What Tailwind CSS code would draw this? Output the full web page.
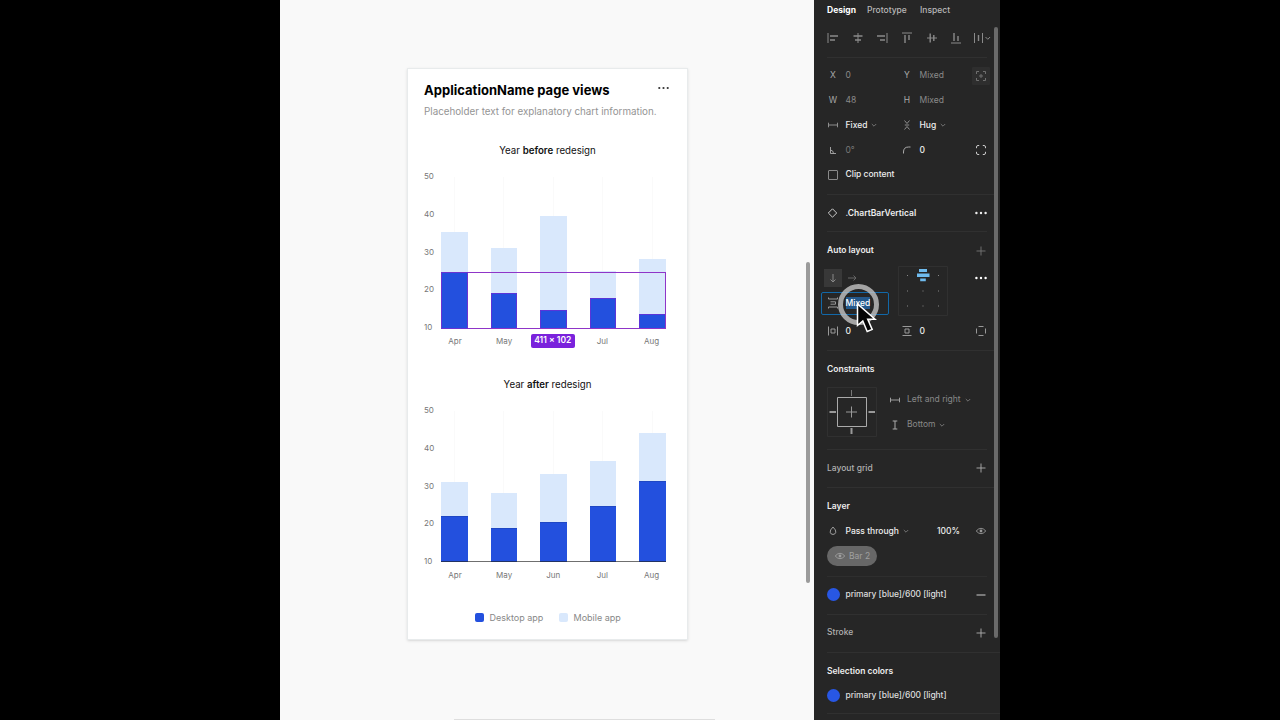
<!DOCTYPE html>
<html lang="en">
<head>
<meta charset="utf-8">
<title>ApplicationName page views</title>
<script src="https://cdn.jsdelivr.net/npm/@tailwindcss/browser@4"></script>
</head>
<body class="bg-black">
<svg class="hidden">
  <defs>
    <symbol id="chev" viewBox="0 0 6 6"><path d="M.8 2 3 4.200 5.200 2" fill="none" stroke="currentColor" stroke-width=".8"/></symbol>
    <symbol id="plus" viewBox="0 0 12 12"><path d="M1.500 6h9M6 1.500v9" fill="none" stroke="currentColor" stroke-width=".9"/></symbol>
    <symbol id="dots" viewBox="0 0 12 12"><g fill="currentColor"><circle cx="1.400" cy="6" r="1.200"/><circle cx="6" cy="6" r="1.200"/><circle cx="10.600" cy="6" r="1.200"/></g></symbol>
    <symbol id="horiz" viewBox="0 0 12 12"><path d="M1.500 3.700v4.600M10.500 3.700v4.600M1.500 6h9" fill="none" stroke="currentColor" stroke-width=".9"/></symbol>
    <symbol id="eye" viewBox="0 0 12 12"><path d="M1.200 6Q6 .6 10.800 6 6 11.400 1.200 6Z" fill="none" stroke="currentColor" stroke-width=".9"/><circle cx="6" cy="6" r="1.400" fill="currentColor"/></symbol>
  </defs>
</svg>
<div class="w-[720px] h-[720px] ml-[280px] flex overflow-hidden relative font-['Inter',sans-serif]">

  <main class="w-[534px] h-full bg-[#f9f9f9] pl-[127px] pt-[68px]">
    <article class="w-[281px] h-[572px] bg-white outline -outline-offset-1 outline-[#e8ebec] shadow-sm shadow-black/10 flex flex-col">
      <header class="h-[67px] pl-[17px] pr-[19px] pt-[13px] flex justify-between">
        <div>
          <h1 class="text-[13px] leading-[18px] font-bold text-black whitespace-nowrap tracking-[.02px]">ApplicationName page views</h1>
          <p class="mt-[4.500px] text-[9.800px] leading-[16px] text-[#949494] whitespace-nowrap">Placeholder text for explanatory chart information.</p>
        </div>
        <svg class="w-[11px] h-3 mt-[1px] shrink-0 -ml-5 text-[#333]"><use href="#dots"/></svg>
      </header>

      <section class="h-[234px] pl-[17px]">
        <h2 class="h-8 w-[247px] text-center text-[9.700px] leading-[32px] text-[#111]">Year <b class="font-semibold">before</b> redesign</h2>
        <div class="flex">
          <ol class="w-[17px] h-[168px] mt-[1px] flex flex-col text-[8px] leading-[17px] text-[#777]">
            <li class="h-[37.900px]">50</li><li class="h-[37.900px]">40</li><li class="h-[37.900px]">30</li><li class="h-[37.900px]">20</li><li>10</li>
          </ol>
          <div class="w-[224.500px]">
            <div class="h-[151px] mt-[10px] relative flex justify-between items-end">
              <div class="w-[26.500px] h-full flex flex-col items-center"><i class="w-px flex-1 bg-[#fafafa]"></i><i class="w-full h-[40px] bg-[#d9e8fc]"></i><i class="w-full h-[56px] bg-[#2350de]"></i></div>
              <div class="w-[26.500px] h-full flex flex-col items-center"><i class="w-px flex-1 bg-[#fafafa]"></i><i class="w-full h-[45px] bg-[#d9e8fc]"></i><i class="w-full h-[35px] bg-[#2350de] border border-b-0 border-[#5a35d8]"></i></div>
              <div class="w-[26.500px] h-full flex flex-col items-center"><i class="w-px flex-1 bg-[#fafafa]"></i><i class="w-full h-[94px] bg-[#d9e8fc]"></i><i class="w-full h-[18.500px] bg-[#2350de] border border-b-0 border-[#5a35d8]"></i></div>
              <div class="w-[26.500px] h-full flex flex-col items-center"><i class="w-px flex-1 bg-[#fafafa]"></i><i class="w-full h-[26.500px] bg-[#d9e8fc]"></i><i class="w-full h-[30.500px] bg-[#2350de] border border-b-0 border-[#5a35d8]"></i></div>
              <div class="w-[26.500px] h-full flex flex-col items-center"><i class="w-px flex-1 bg-[#fafafa]"></i><i class="w-full h-[55px] bg-[#d9e8fc]"></i><i class="w-full h-[14px] bg-[#2350de] border border-b-0 border-[#5a35d8]"></i></div>
              <div class="absolute left-0 -right-[.5px] bottom-[-1px] h-[57px] border border-[#8f35c8]"></div>
              <div class="absolute left-0 bottom-[-1px] h-[57px] w-[27px] border border-[#6b35d0]"></div>
            </div>
            <div class="relative flex justify-between text-[8px] leading-[12px] text-[#777] mt-[7px]">
              <span class="w-[28px] text-center">Apr</span><span class="w-[28px] text-center">May</span><span class="w-[28px] text-center"></span><span class="w-[28px] text-center">Jul</span><span class="w-[28px] text-center">Aug</span>
              <span class="absolute left-[90px] -top-[1px] w-[43.500px] h-[13.500px] rounded-[2px] bg-[#7a22dc] text-white text-center font-semibold text-[8.500px] leading-[13.500px] whitespace-nowrap">411 × 102</span>
            </div>
          </div>
        </div>
      </section>

      <section class="h-[234px] pl-[17px]">
        <h2 class="h-8 w-[247px] text-center text-[9.700px] leading-[32px] text-[#111]">Year <b class="font-semibold">after</b> redesign</h2>
        <div class="flex">
          <ol class="w-[17px] h-[168px] mt-[1px] flex flex-col text-[8px] leading-[17px] text-[#777]">
            <li class="h-[37.900px]">50</li><li class="h-[37.900px]">40</li><li class="h-[37.900px]">30</li><li class="h-[37.900px]">20</li><li>10</li>
          </ol>
          <div class="w-[224.500px]">
            <div class="h-[151px] mt-[10px] relative flex justify-between items-end">
              <div class="w-[26.500px] h-full flex flex-col items-center"><i class="w-px flex-1 bg-[#fafafa]"></i><i class="w-full h-[34px] bg-[#d9e8fc]"></i><i class="w-full h-[46px] bg-[#2350de] border-t border-[#1f47c4]"></i></div>
              <div class="w-[26.500px] h-full flex flex-col items-center"><i class="w-px flex-1 bg-[#fafafa]"></i><i class="w-full h-[35px] bg-[#d9e8fc]"></i><i class="w-full h-[34px] bg-[#2350de] border-t border-[#1f47c4]"></i></div>
              <div class="w-[26.500px] h-full flex flex-col items-center"><i class="w-px flex-1 bg-[#fafafa]"></i><i class="w-full h-[48px] bg-[#d9e8fc]"></i><i class="w-full h-[40px] bg-[#2350de] border-t border-[#1f47c4]"></i></div>
              <div class="w-[26.500px] h-full flex flex-col items-center"><i class="w-px flex-1 bg-[#fafafa]"></i><i class="w-full h-[45px] bg-[#d9e8fc]"></i><i class="w-full h-[56px] bg-[#2350de] border-t border-[#1f47c4]"></i></div>
              <div class="w-[26.500px] h-full flex flex-col items-center"><i class="w-px flex-1 bg-[#fafafa]"></i><i class="w-full h-[48px] bg-[#d9e8fc]"></i><i class="w-full h-[81px] bg-[#2350de] border-t border-[#1f47c4]"></i></div>
              <div class="absolute inset-x-0 bottom-0 h-px bg-[#222]/65"></div>
            </div>
            <div class="flex justify-between text-[8px] leading-[12px] text-[#777] mt-[7px]">
              <span class="w-[28px] text-center">Apr</span><span class="w-[28px] text-center">May</span><span class="w-[28px] text-center">Jun</span><span class="w-[28px] text-center">Jul</span><span class="w-[28px] text-center">Aug</span>
            </div>
          </div>
        </div>
      </section>

      <footer class="flex pl-[68px] pt-[8px] h-[21px] items-center text-[9px] leading-[14px] text-[#888]">
        <i class="w-[9px] h-[9px] rounded-[2px] bg-[#2350de] mr-[5.500px]"></i><span class="w-[69.500px]">Desktop app</span>
        <i class="w-[9px] h-[9px] rounded-[2px] bg-[#d9e8fc] mr-[5.500px]"></i><span>Mobile app</span>
      </footer>
    </article>
  </main>

  <aside class="w-[186px] h-full bg-[#262626] pl-[13px] text-[8.500px] text-white whitespace-nowrap">
    <nav class="h-[20px] pt-[1px] flex items-center font-medium text-[#b8b8b8]"><span class="w-[40px] font-bold text-white">Design</span><span class="w-[53px]">Prototype</span><span>Inspect</span></nav>
    <div class="h-[37px] w-[168px] pb-[2px] flex items-center text-[#8a8a8a] gap-[12.700px]">
      <svg class="w-3 h-3 shrink-0" viewBox="0 0 12 12"><path d="M1 1v10" stroke="currentColor"/><path d="M3 4h8M3 8h5" stroke="currentColor" stroke-width="1.400"/></svg>
      <svg class="w-3 h-3 shrink-0" viewBox="0 0 12 12"><path d="M6 1v10" stroke="currentColor"/><path d="M1.500 4h9M3 8h6" stroke="currentColor" stroke-width="1.400"/></svg>
      <svg class="w-3 h-3 shrink-0" viewBox="0 0 12 12"><path d="M11 1v10" stroke="currentColor"/><path d="M1 4h8M4 8h5" stroke="currentColor" stroke-width="1.400"/></svg>
      <svg class="w-3 h-3 shrink-0" viewBox="0 0 12 12"><path d="M1 1h10" stroke="currentColor"/><path d="M4 3v8M8 3v5" stroke="currentColor" stroke-width="1.400"/></svg>
      <svg class="w-3 h-3 shrink-0" viewBox="0 0 12 12"><path d="M1 6h10" stroke="currentColor"/><path d="M4.200 1.500v9M7.800 3v6" stroke="currentColor" stroke-width="1.400"/></svg>
      <svg class="w-3 h-3 shrink-0" viewBox="0 0 12 12"><path d="M1 11h10" stroke="currentColor"/><path d="M4 1v8M8 4v5" stroke="currentColor" stroke-width="1.400"/></svg>
      <svg class="w-[18px] h-3 shrink-0 -ml-[2px]" viewBox="0 0 18 12"><path d="M1.500 1v10M9.500 1v10M12.500 5l2.300 2.300L17.100 5" fill="none" stroke="currentColor"/><path d="M5.500 3v6" stroke="currentColor" stroke-width="1.400"/></svg>
    </div>

    <section class="h-[137px] w-[160px] border-t border-[#303030] pt-[5.500px] text-[#8a8a8a]">
      <div class="h-[24.700px] grid grid-cols-[18.500px_55.500px_18.500px_55.500px_12px] items-center"><span class="w-3 text-center text-[#aaa]">X</span><span>0</span><span class="w-3 text-center text-[#aaa]">Y</span><span>Mixed</span>
        <span class="w-[18px] h-[18px] -ml-[3px] bg-[#2e2e2e] rounded-[1px] flex items-center justify-center"><svg class="w-3 h-3 text-[#777]" viewBox="0 0 12 12"><path d="M1.500 4V1.500H4M8 1.500h2.500V4M10.500 8v2.500H8M4 10.500H1.500V8M6 4v4M4 6h4" fill="none" stroke="currentColor" stroke-width=".9"/></svg></span></div>
      <div class="h-[24.700px] grid grid-cols-[18.500px_55.500px_18.500px_55.500px_12px] items-center"><span class="w-3 text-center text-[#aaa]">W</span><span>48</span><span class="w-3 text-center text-[#aaa]">H</span><span>Mixed</span></div>
      <div class="h-[24.700px] grid grid-cols-[18.500px_55.500px_18.500px_55.500px_12px] items-center text-[#999]"><svg class="w-3 h-3"><use href="#horiz"/></svg><span class="flex items-center gap-1 text-[#eee] font-medium">Fixed<svg class="w-1.5 h-1.5 text-[#888]"><use href="#chev"/></svg></span>
        <svg class="w-3 h-3" viewBox="0 0 12 12"><path d="m3.500 1.500 2.500 3 2.500-3M3.500 10.500l2.500-3 2.500 3M3.800 6h4.400" fill="none" stroke="currentColor" stroke-width=".9"/></svg><span class="flex items-center gap-1 text-[#eee] font-medium">Hug<svg class="w-1.5 h-1.5 text-[#888]"><use href="#chev"/></svg></span></div>
      <div class="h-[24.700px] grid grid-cols-[18.500px_55.500px_18.500px_55.500px_12px] items-center text-[#aaa]"><svg class="w-3 h-3" viewBox="0 0 12 12"><path d="M3.500 3v6.500H9M3.500 6q3 .5 3 3.500" fill="none" stroke="currentColor" stroke-width=".9"/></svg><span class="text-[#777]">0°</span>
        <svg class="w-3 h-3" viewBox="0 0 12 12"><path d="M2.500 9.500V8q0-5 5-5H9.500" fill="none" stroke="currentColor"/></svg><span class="text-[#eee] font-medium">0</span>
        <svg class="w-3 h-3 text-[#ccc]" viewBox="0 0 12 12"><path d="M1.500 4.200V3q0-1.500 1.500-1.500h1.200M7.800 1.500H9q1.500 0 1.500 1.500v1.200M10.500 7.800V9q0 1.500-1.500 1.500H7.800M4.200 10.500H3Q1.500 10.500 1.500 9V7.800" fill="none" stroke="currentColor"/></svg></div>
      <div class="h-[24.700px] flex items-center text-[#eee] font-medium"><i class="w-[10px] h-[10px] ml-[1px] mr-[7.500px] border border-[#8a8a8a] rounded-[1px]"></i>Clip content</div>
    </section>

    <section class="h-[37px] w-[168px] border-t border-[#303030]">
      <div class="h-full w-[160px] flex items-center font-semibold text-[#eee]"><svg class="w-[11px] h-3 mr-[7.500px]" viewBox="0 0 11 12"><path d="M5.500 1.800 9.700 6l-4.200 4.200L1.300 6Z" fill="none" stroke="#ccc"/></svg>.ChartBarVertical<svg class="w-3 h-3 ml-auto"><use href="#dots"/></svg></div>
    </section>

    <section class="h-[119px] w-[160px] border-t border-[#303030]">
      <div class="h-[36px] pt-[1px] flex items-center justify-between font-semibold text-[#eee]">Auto layout<svg class="w-3 h-3 text-[#777]"><use href="#plus"/></svg></div>
      <div class="h-[49px] flex -ml-[6px] mt-[-2px]">
        <div class="w-[68px] mr-[9px] flex flex-col gap-[3.500px]">
          <div class="h-[22px] pl-[2.500px] pt-[2px] flex items-center gap-[4px]"><span class="w-[18px] h-[18px] bg-[#383838] flex items-center justify-center"><svg class="w-3 h-3 text-[#888]" viewBox="0 0 12 12"><path d="M6 2v8M3.500 7.500 6 10l2.500-2.500" fill="none" stroke="currentColor"/></svg></span><svg class="w-3 h-3 text-[#666]" viewBox="0 0 12 12"><path d="M2 6h8M7.500 3.500 10 6 7.500 8.500" fill="none" stroke="currentColor"/></svg></div>
          <div class="h-[23px] shrink-0 outline-[1.500px] -outline-offset-1 outline-[#1268a8] rounded-[2px] flex items-center pl-[6px] relative"><svg class="w-3 h-3 mr-[6.500px] text-[#999]" viewBox="0 0 12 12"><path d="M1.500.500v1.500h9V.500M1.500 11.500V10h9v1.500M3.500 4.800h5v2.400h-5" fill="none" stroke="currentColor"/></svg><span class="bg-[#24598c] leading-[12px] text-white font-medium">Mixed</span>
            <span class="absolute left-[16.500px] -top-[8px] w-[41px] h-[41px] rounded-full border-[5px] border-[#c4c4c4]/80"></span>
            <svg class="absolute left-[34px] top-[10px] w-[24px] h-[34px]" viewBox="0 0 24 34"><path d="M2.500 2v21.500l5.300-4.500 4.400 10.500 5-2.100-4.500-10.200h7.300Z" fill="#050505" stroke="#fff" stroke-width="1.500"/></svg>
          </div>
        </div>
        <svg class="w-[50px] h-[50px]" viewBox="0 0 50 50"><path d="M.5.500h49v49H.5z" fill="none" stroke="#303030"/><g fill="#888"><path d="M9 9h1v1H9zM40 9h1v1h-1zM9 24.500h1v1H9zM24.500 24.500h1v1h-1zM40 24.500h1v1h-1zM9 39.500h1v1H9zM24.500 39.500h1v1h-1zM40 39.500h1v1h-1z"/></g><path d="M21 3h8v3h-8zM19 7.600h12.500v3.400h-12.500zM22.200 12.400h5.600v2.900h-5.600z" fill="#6fbbee"/></svg>
        <svg class="w-3 h-3 ml-auto mt-[6px]"><use href="#dots"/></svg>
      </div>
      <div class="h-[32px] grid grid-cols-[18.500px_55.500px_18.500px_55.500px_12px] items-center text-[#999]"><svg class="w-3 h-3" viewBox="0 0 12 12"><path d="M1.500 1.500v9M10.500 1.500v9M4 4h4v4H4z" fill="none" stroke="currentColor"/></svg><span class="text-[#eee] font-medium">0</span><svg class="w-3 h-3" viewBox="0 0 12 12"><path d="M1.500 1.500h9M1.500 10.500h9M4 4h4v4H4z" fill="none" stroke="currentColor"/></svg><span class="text-[#eee] font-medium">0</span><svg class="w-3 h-3" viewBox="0 0 12 12"><path d="M3.500 1.500h5M3.500 10.500h5M1.500 3.500v5M10.500 3.500v5" fill="none" stroke="currentColor"/></svg></div>
    </section>

    <section class="h-[99px] w-[168px] border-t border-[#303030]">
      <div class="h-[36px] flex items-center font-semibold text-[#eee]">Constraints</div>
      <div class="flex text-[#888]">
        <svg class="w-[50px] h-[50px] shrink-0" viewBox="0 0 50 50"><path d="M.5.500h49v49H.5z" fill="none" stroke="#303030"/><path d="M10.500 10.500h29v29h-29z" fill="none" stroke="#aaa"/><path d="M19 25h11M24.500 19.500v11" stroke="#999"/><path d="M24.500 3v6" stroke="#777"/><path d="M2.500 25H9M41.500 25H48M24.500 41v6" stroke="#999" stroke-width="2"/></svg>
        <div class="ml-[12px] pt-[0px] grow">
          <div class="h-[25px] flex items-center"><svg class="w-3 h-3 mr-[6px] text-[#aaa]"><use href="#horiz"/></svg>Left and right<svg class="w-1.5 h-1.5 ml-1"><use href="#chev"/></svg></div>
          <div class="h-[25px] flex items-center"><svg class="w-3 h-3 mr-[6px] text-[#aaa]" viewBox="0 0 12 12"><path d="M3.700 2h4.600M3.700 10h4.600M6 2v8" stroke="currentColor"/></svg>Bottom<svg class="w-1.5 h-1.5 ml-1"><use href="#chev"/></svg></div>
        </div>
      </div>
    </section>

    <section class="h-[38px] pb-[1px] w-[160px] border-t border-[#303030] flex items-center justify-between font-medium text-[#b0b0b0]">Layout grid<svg class="w-3 h-3"><use href="#plus"/></svg></section>

    <section class="h-[89px] w-[168px] border-t border-[#303030]">
      <div class="h-[36px] flex items-center font-semibold text-[#eee]">Layer</div>
      <div class="h-[14px] w-[160px] flex items-center font-medium text-[#eee]"><svg class="w-3 h-3 mr-[6.500px]" viewBox="0 0 12 12"><path d="M6 2Q9.300 5.200 8.800 7.300A2.900 2.900 0 0 1 3.200 7.300Q2.700 5.200 6 2Z" fill="none" stroke="#aaa" stroke-width=".9"/></svg>Pass through<svg class="w-1.5 h-1.5 ml-1 text-[#888]"><use href="#chev"/></svg><span class="ml-auto mr-[15px]">100%</span><svg class="w-3 h-3 text-[#999]"><use href="#eye"/></svg></div>
      <div class="mt-[8px] w-[50px] h-[20px] rounded-full bg-[#676767] text-[#a0a0a0] flex items-center pl-[7px] gap-[3px]"><svg class="w-3 h-3 shrink-0"><use href="#eye"/></svg>Bar 2</div>
    </section>

    <section class="h-[38px] pb-[2px] w-[160px] border-t border-[#2e2e2e] flex items-center font-medium text-[#ddd]"><i class="w-[13px] h-[13px] rounded-full bg-[#2857e4] mr-[5.500px]"></i><span class="tracking-[-.08px]">primary [blue]/600 [light]</span><svg class="w-3 h-3 ml-auto" viewBox="0 0 12 12"><path d="M1.500 6h9" stroke="#ccc"/></svg></section>
    <section class="h-[38px] pb-[2px] w-[160px] border-t border-[#303030] flex items-center justify-between font-medium text-[#b0b0b0]">Stroke<svg class="w-3 h-3"><use href="#plus"/></svg></section>
    <section class="h-[62px] w-[173px] border-t border-b border-[#303030]">
      <div class="h-[36px] flex items-center font-semibold text-[#eee]">Selection colors</div>
      <div class="h-[13px] -mt-[.5px] flex items-center font-medium text-[#ddd]"><i class="w-[13px] h-[13px] rounded-full bg-[#2857e4] mr-[5.500px]"></i><span class="tracking-[-.08px]">primary [blue]/600 [light]</span></div>
    </section>
  </aside>

  <div class="absolute left-[526px] top-[262px] w-[4px] h-[321px] rounded-full bg-[#9b9b9b]"></div>
  <div class="absolute left-[714px] top-[27px] w-[4px] h-[611px] rounded-full bg-[#6a6a6a]"></div>
  <div class="absolute left-[174px] top-[719px] w-[261px] h-px bg-[#dedede]"></div>
</div>
</body>
</html>
